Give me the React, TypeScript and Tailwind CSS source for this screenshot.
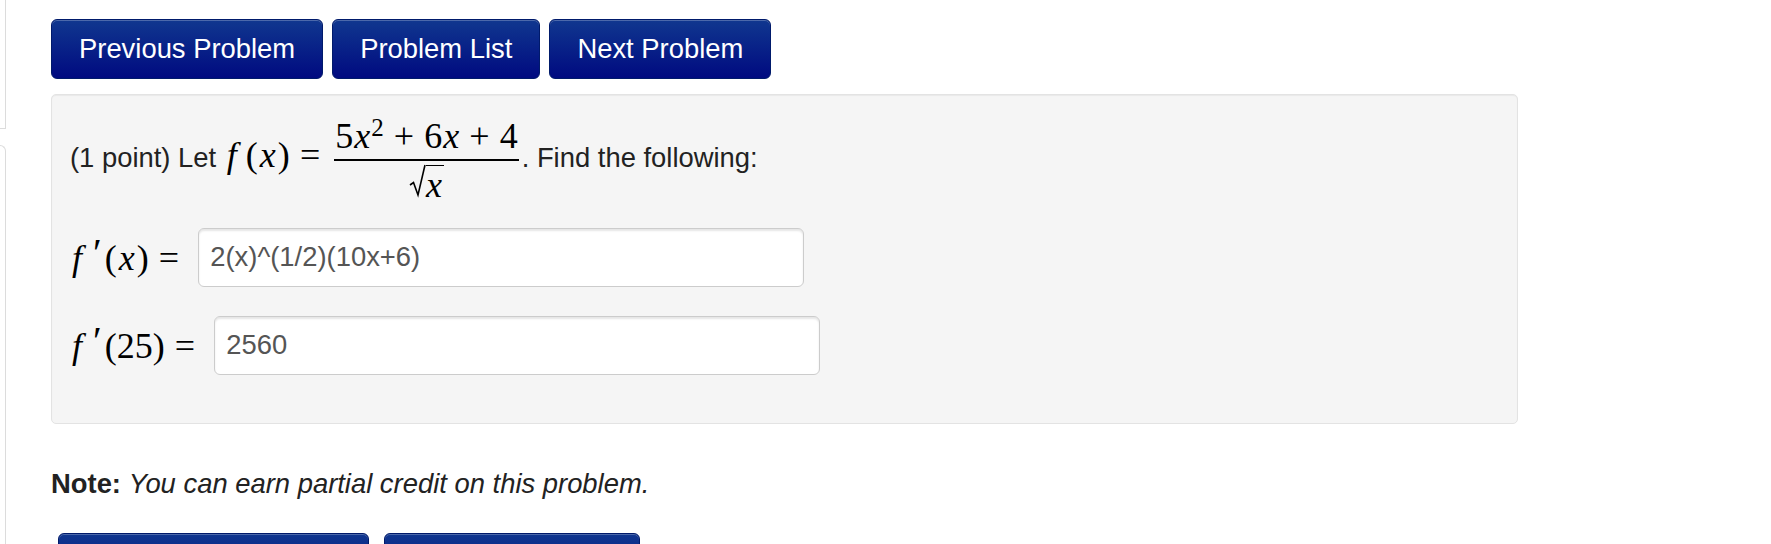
import React from 'react';

const navBtn =
    'flex h-[60px] items-center rounded-[6px] border border-[#001a6b] bg-[linear-gradient(to_bottom,#10378f,#000a80)] px-[27px] text-white shadow-[inset_0_1px_0_rgba(255,255,255,0.25)]';

const math = "font-['Liberation_Serif',serif] text-[36px] leading-none text-black";

const answerInput =
    'h-[59px] w-[606px] rounded-[6px] border border-[#cccccc] bg-white px-[11px] text-[27.4px] text-[#555] shadow-[inset_0_2px_2px_rgba(0,0,0,0.1)] outline-none';

function Eq() {
    return <span className="mx-[0.28em] not-italic">=</span>;
}

function Plus() {
    return <span className="mx-[0.28em] not-italic">+</span>;
}

function X() {
    return <i className="mx-[2px]">x</i>;
}

function FPrime() {
    return (
        <>
            <i className="ml-[2px]">f</i>
            <span className="relative -top-[4px] ml-[11px] mr-[3px] text-[40px]">′</span>
        </>
    );
}

export default function App() {
    return (
        <div className="h-[544px] w-[1771px] overflow-hidden bg-white font-['Liberation_Sans',Arial,sans-serif] text-[27.4px] text-[#222]">
            <div className="flex">
                {/* edges of the sidebar panels */}
                <div className="flex w-[6px] shrink-0 flex-col">
                    <div className="h-[129px] border-b border-r border-[#dcdcdc]" />
                    <div className="mt-[16px] h-[420px] rounded-tr-[10px] border-r border-t border-[#dcdcdc]" />
                </div>

                <main className="ml-[45px] w-[1467px]">
                    {/* Nav */}
                    <div className="mt-[19px] flex gap-[9px]">
                        <button className={navBtn}>Previous Problem</button>
                        <button className={navBtn}>Problem List</button>
                        <button className={navBtn}>Next Problem</button>
                    </div>

                    {/* Problem */}
                    <div className="mt-[15px] rounded-[5px] border border-[#e3e3e3] bg-[#f5f5f5] px-[18px] pb-[48px] pt-[22px] shadow-[inset_0_1px_1px_rgba(0,0,0,0.05)]">
                        <p className="leading-[34px]">
                            (1 point) Let{' '}
                            <span className={math}>
                                <i className="ml-[3px]">f</i>
                                <span className="ml-[9px]">(</span>
                                <X />)
                                <Eq />
                            </span>
                            <span className="ml-[4px] inline-flex flex-col items-center align-middle">
                                <span className={`${math} px-[1px] pb-[5px] pt-[1px]`}>
                                    5<i className="ml-[1px]">x</i>
                                    <sup className="ml-[1px] text-[25px]">2</sup>
                                    <Plus />6<i className="ml-[1px]">x</i>
                                    <Plus />4
                                </span>
                                <span className="h-[1.5px] self-stretch bg-black" />
                                <span className="flex items-start pt-[3px]">
                                    <svg width="17" height="34" viewBox="0 0 17 34" className="shrink-0">
                                        <path d="M1 21 L4.5 18.5 L9 31 L16 1" fill="none" stroke="#000" strokeWidth="1.6" />
                                    </svg>
                                    <span className={`${math} mt-[1px] border-t-[1.5px] border-black pr-[2px] pt-[1px]`}>
                                        <i>x</i>
                                    </span>
                                </span>
                            </span>
                            <span className="ml-[3px]">. Find the following:</span>
                        </p>

                        <div className="mt-[25px] flex items-center">
                            <span className={math}>
                                <FPrime />(<X />)
                                <Eq />
                            </span>
                            <input readOnly value="2(x)^(1/2)(10x+6)" className={`ml-[9px] ${answerInput}`} />
                        </div>

                        <div className="mt-[29px] flex items-center">
                            <span className={math}>
                                <FPrime />
                                (25)
                                <Eq />
                            </span>
                            <input readOnly value="2560" className={`ml-[9px] ${answerInput}`} />
                        </div>
                    </div>

                    {/* Note */}
                    <p className="mt-[39px]">
                        <b>Note:</b> <i>You can earn partial credit on this problem.</i>
                    </p>

                    {/* Preview / Submit, cut off at the bottom edge */}
                    <div className="ml-[7px] mt-[29px] flex gap-[15px]">
                        <button aria-label="Preview My Answers" className={`${navBtn} w-[311px]`} />
                        <button aria-label="Submit Answers" className={`${navBtn} w-[256px]`} />
                    </div>
                </main>
            </div>
        </div>
    );
}
